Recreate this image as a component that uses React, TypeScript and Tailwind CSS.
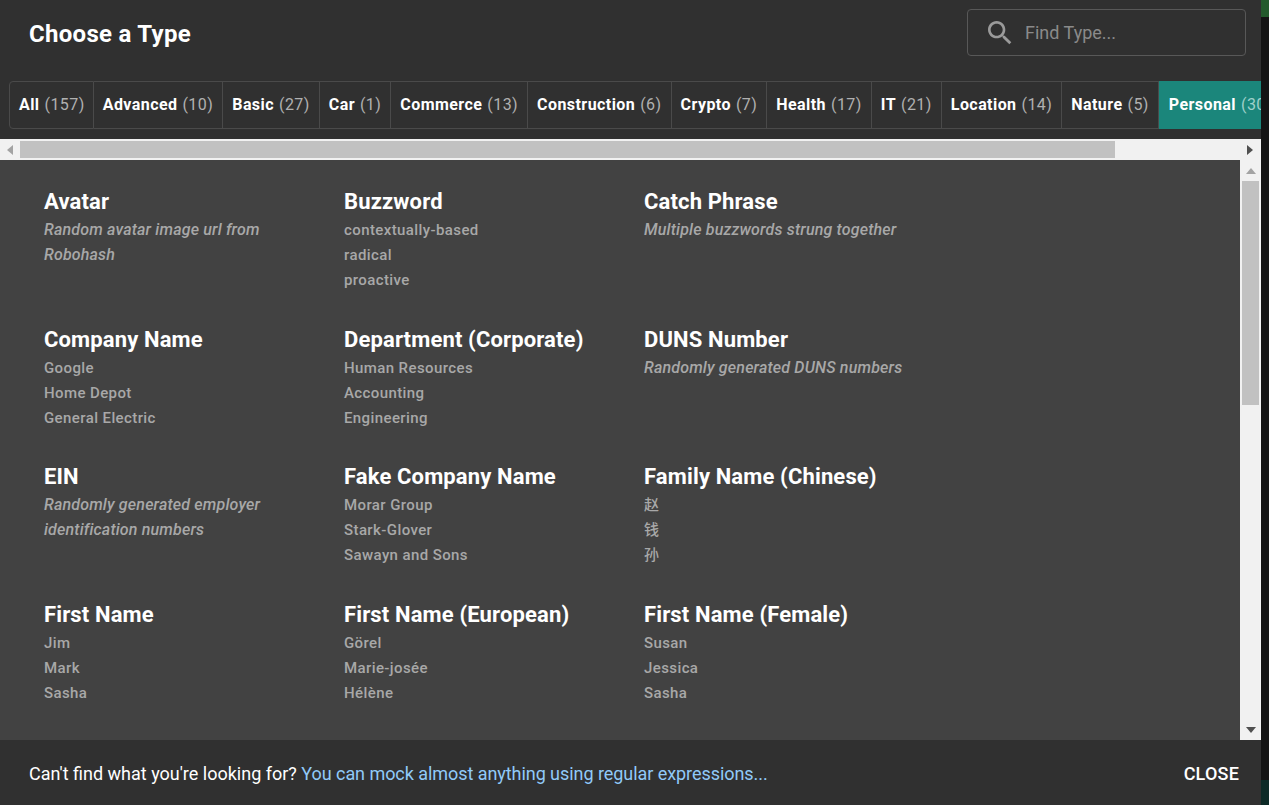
const tabs: [string, number][] = [
  ["All", 157],
  ["Advanced", 10],
  ["Basic", 27],
  ["Car", 1],
  ["Commerce", 13],
  ["Construction", 6],
  ["Crypto", 7],
  ["Health", 17],
  ["IT", 21],
  ["Location", 14],
  ["Nature", 5],
  ["Personal", 30],
];

type TypeCard = { name: string; desc?: string; samples?: string[] };

const types: TypeCard[] = [
  { name: "Avatar", desc: "Random avatar image url from Robohash" },
  { name: "Buzzword", samples: ["contextually-based", "radical", "proactive"] },
  { name: "Catch Phrase", desc: "Multiple buzzwords strung together" },
  { name: "Company Name", samples: ["Google", "Home Depot", "General Electric"] },
  { name: "Department (Corporate)", samples: ["Human Resources", "Accounting", "Engineering"] },
  { name: "DUNS Number", desc: "Randomly generated DUNS numbers" },
  { name: "EIN", desc: "Randomly generated employer identification numbers" },
  { name: "Fake Company Name", samples: ["Morar Group", "Stark-Glover", "Sawayn and Sons"] },
  { name: "Family Name (Chinese)", samples: ["赵", "钱", "孙"] },
  { name: "First Name", samples: ["Jim", "Mark", "Sasha"] },
  { name: "First Name (European)", samples: ["Görel", "Marie-josée", "Hélène"] },
  { name: "First Name (Female)", samples: ["Susan", "Jessica", "Sasha"] },
];

export default function App() {
  return (
    <div className="h-[805px] w-[1269px] overflow-hidden flex bg-[#111111] font-['Roboto','Noto_Sans_CJK_SC',sans-serif]">
      <div className="w-[1261px] h-full flex flex-col bg-[#303030] text-white shrink-0">
        {/* Header */}
        <div className="h-[81px] shrink-0 flex items-start justify-between pl-[29px] pr-[15px] pt-[9px]">
          <h2 className="text-[24px] leading-[50px] font-bold tracking-[0.3px]">Choose a Type</h2>
          <div className="w-[279px] h-[47px] border border-[#585858] rounded-[4px] flex items-center pl-[16px]">
            <svg width="32" height="32" viewBox="0 0 24 24" fill="#9a9a9a">
              <path d="M15.5 14h-.79l-.28-.27C15.41 12.59 16 11.11 16 9.5 16 5.91 13.09 3 9.5 3S3 5.91 3 9.5 5.91 16 9.5 16c1.61 0 3.09-.59 4.23-1.57l.27.28v.79l5 4.99L20.49 19l-4.99-5zm-6 0C7.01 14 5 11.99 5 9.5S7.01 5 9.5 5 14 7.01 14 9.5 11.99 14 9.5 14z" />
            </svg>
            <span className="ml-[9px] text-[18px] text-[#8a8a8a]">Find Type...</span>
          </div>
        </div>

        {/* Category tabs */}
        <div className="h-[58px] shrink-0 pl-[9px] overflow-hidden">
          <div className="flex h-[48px] w-max">
            {tabs.map(([label, count], i) => {
              const active = label === "Personal";
              return (
                <div
                  key={label}
                  className={
                    active
                      ? "h-full flex items-center pl-[10px] pr-[9px] text-[16px] tracking-[0.43px] bg-[#1b867b] border-b border-[#1b867b]"
                      : i === 0
                        ? "h-full flex items-center pl-[9px] pr-[8px] text-[16px] tracking-[0.43px] border border-[#4a4a4a] rounded-l-[4px]"
                        : "h-full flex items-center pl-[9px] pr-[9px] text-[16px] tracking-[0.43px] border-y border-r border-[#4a4a4a]"
                  }
                >
                  <span className="font-bold whitespace-nowrap">{label}</span>
                  <span className={active ? "ml-[5px] text-[#9fd0ca]" : "ml-[5px] text-[#b0b0b0]"}>({count})</span>
                </div>
              );
            })}
          </div>
        </div>

        {/* Horizontal scrollbar */}
        <div className="h-[21px] shrink-0 bg-[#f1f1f1] flex items-stretch py-[2px]">
          <div className="w-[20px] flex items-center justify-center">
            <svg width="6" height="10" viewBox="0 0 6 10"><path d="M6 0v10L0 5z" fill="#a3a3a3" /></svg>
          </div>
          <div className="w-[1095px] bg-[#c1c1c1]" />
          <div className="flex-1 flex items-center justify-end pr-[8px]">
            <svg width="6" height="10" viewBox="0 0 6 10"><path d="M0 0v10l6-5z" fill="#505050" /></svg>
          </div>
        </div>

        {/* Type list */}
        <div className="flex-1 min-h-0 flex bg-[#424242]">
          <div className="flex-1 min-w-0 overflow-hidden pl-[44px] pt-[28px]">
            <div className="grid grid-cols-[300px_300px_300px] auto-rows-[137.5px]">
              {types.map((t) => (
                <div key={t.name} className="pr-[30px]">
                  <div className="text-[22px] leading-[28px] font-bold tracking-[0.14px] mb-[2px]">{t.name}</div>
                  {t.desc && (
                    <div className="-mt-px text-[16px] leading-[25px] italic font-medium tracking-[0.17px] text-[#a8a8a8]">
                      {t.desc}
                    </div>
                  )}
                  {t.samples &&
                    t.samples.map((s) => (
                      <div key={s} className="text-[15px] leading-[25px] font-medium tracking-[0.4px] text-[#a8a8a8]">
                        {s}
                      </div>
                    ))}
                </div>
              ))}
            </div>
          </div>
          <div className="w-[21px] shrink-0 bg-[#f1f1f1] flex flex-col">
            <div className="h-[21px] flex items-center justify-center">
              <svg width="10" height="6" viewBox="0 0 10 6"><path d="M0 6h10L5 0z" fill="#a3a3a3" /></svg>
            </div>
            <div className="mx-[2px] h-[224px] bg-[#c1c1c1]" />
            <div className="flex-1 flex items-end justify-center pb-[7px]">
              <svg width="10" height="6" viewBox="0 0 10 6"><path d="M0 0h10L5 6z" fill="#505050" /></svg>
            </div>
          </div>
        </div>

        {/* Footer */}
        <div className="h-[65px] shrink-0 flex items-center justify-between pl-[29px] pr-[22px] pt-[2px] text-[18px]">
          <div>
            Can't find what you're looking for?{" "}
            <span className="text-[#90caf9] tracking-[-0.055px]">You can mock almost anything using regular expressions...</span>
          </div>
          <div className="font-medium tracking-[0.2px]">CLOSE</div>
        </div>
      </div>

      {/* Page behind the modal */}
      <div className="flex-1 flex flex-col">
        <div className="h-[17px] bg-[#235a2c]" />
        <div className="flex-1 bg-[#141414]" />
        <div className="h-[25px] bg-[#0d2a27]" />
      </div>
    </div>
  );
}
